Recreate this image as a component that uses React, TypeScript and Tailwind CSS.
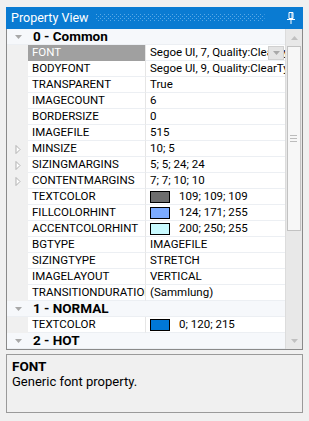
import React from 'react';

type Row =
  | { kind: 'cat'; label: string }
  | { kind: 'prop'; name: string; value: string; swatch?: string; expandable?: boolean; selected?: boolean };

const rows: Row[] = [
  { kind: 'cat', label: '0 - Common' },
  { kind: 'prop', name: 'FONT', value: 'Segoe UI, 7, Quality:ClearType', selected: true },
  { kind: 'prop', name: 'BODYFONT', value: 'Segoe UI, 9, Quality:ClearType' },
  { kind: 'prop', name: 'TRANSPARENT', value: 'True' },
  { kind: 'prop', name: 'IMAGECOUNT', value: '6' },
  { kind: 'prop', name: 'BORDERSIZE', value: '0' },
  { kind: 'prop', name: 'IMAGEFILE', value: '515' },
  { kind: 'prop', name: 'MINSIZE', value: '10; 5', expandable: true },
  { kind: 'prop', name: 'SIZINGMARGINS', value: '5; 5; 24; 24', expandable: true },
  { kind: 'prop', name: 'CONTENTMARGINS', value: '7; 7; 10; 10', expandable: true },
  { kind: 'prop', name: 'TEXTCOLOR', value: '109; 109; 109', swatch: '#6d6d6d' },
  { kind: 'prop', name: 'FILLCOLORHINT', value: '124; 171; 255', swatch: '#7cabff' },
  { kind: 'prop', name: 'ACCENTCOLORHINT', value: '200; 250; 255', swatch: '#c8faff' },
  { kind: 'prop', name: 'BGTYPE', value: 'IMAGEFILE' },
  { kind: 'prop', name: 'SIZINGTYPE', value: 'STRETCH' },
  { kind: 'prop', name: 'IMAGELAYOUT', value: 'VERTICAL' },
  { kind: 'prop', name: 'TRANSITIONDURATIONS', value: '(Sammlung)' },
  { kind: 'cat', label: '1 - NORMAL' },
  { kind: 'prop', name: 'TEXTCOLOR', value: '0; 120; 215', swatch: '#0078d7' },
  { kind: 'cat', label: '2 - HOT' },
];

function DownTri() {
  return (
    <svg width="9" height="6" viewBox="0 0 9 6">
      <path d="M1 1 L8 1 L4.5 5 Z" fill="#a8a8a8" />
    </svg>
  );
}

function RightTri() {
  return (
    <svg width="6" height="9" viewBox="0 0 6 9">
      <path d="M1 0.5 L5 4.5 L1 8.5 Z" fill="#fff" stroke="#b0b0b0" strokeWidth="1" />
    </svg>
  );
}

function Pin() {
  return (
    <svg width="8" height="12" viewBox="0 0 8 12">
      <path d="M2 0.5 H6 V6.5 H2 Z" fill="none" stroke="#fff" strokeWidth="1" />
      <path d="M5 1 V6" stroke="#fff" strokeWidth="1" />
      <path d="M0 7.5 H8" stroke="#fff" strokeWidth="1" />
      <path d="M4 8 V12" stroke="#fff" strokeWidth="1" />
    </svg>
  );
}

export default function App() {
  return (
    <div
      className="w-[309px] h-[421px] bg-[#f0f0f0] pt-[7px] px-[6px] text-black overflow-hidden"
      style={{ fontFamily: 'Roboto, "Noto Sans", "Liberation Sans", sans-serif' }}
    >
      {/* title bar */}
      <div className="h-[22px] bg-[#0a7bd2] flex items-center pl-[5px] pr-[8px]">
        <span className="text-white text-[12.5px] leading-none whitespace-nowrap">Property View</span>
        <svg className="ml-[8px] flex-1 min-w-0 h-[8px]" preserveAspectRatio="none">
          <defs>
            <pattern id="dots" width="4" height="4" patternUnits="userSpaceOnUse">
              <rect x="0" y="0" width="1" height="1" fill="#5aa9e6" />
              <rect x="2" y="2" width="1" height="1" fill="#5aa9e6" />
            </pattern>
          </defs>
          <rect width="100%" height="100%" fill="url(#dots)" />
        </svg>
        <div className="ml-[22px] flex items-center">
          <Pin />
        </div>
      </div>

      {/* grid */}
      <div className="border-x border-b border-[#8a8a8a] flex h-[321px]">
        <div className="flex-1 min-w-0 flex flex-col">
          {rows.map((r, i) =>
            r.kind === 'cat' ? (
              <div key={i} className="h-[16px] flex items-center bg-[#f6f8fb] border-b border-[#eceff3]">
                <div className="w-[21px] shrink-0 flex justify-center pl-[1px]">
                  <DownTri />
                </div>
                <span className="pl-[5px] text-[13.5px] font-bold leading-none whitespace-nowrap">{r.label}</span>
              </div>
            ) : (
              <div key={i} className="h-[16px] flex">
                <div className="w-[21px] shrink-0 bg-[#f0f0f0] flex items-center justify-center pl-[1px]">
                  {r.expandable && <RightTri />}
                </div>
                <div
                  className={`w-[118px] shrink-0 border-r border-[#e6e6e6] flex items-center pl-[4px] overflow-hidden whitespace-nowrap text-[11.5px] leading-none ${
                    r.selected ? 'bg-[#a0a0a0] text-white' : 'bg-white border-b border-b-[#eceff3]'
                  }`}
                >
                  {r.name}
                </div>
                <div className="flex-1 min-w-0 bg-white border-b border-[#eceff3] flex items-center pl-[4px] overflow-hidden whitespace-nowrap text-[11.5px] leading-none relative">
                  {r.swatch && (
                    <span className="w-[20px] h-[12px] border border-black mr-[9px] shrink-0" style={{ background: r.swatch }} />
                  )}
                  {r.value}
                  {r.selected && (
                    <div className="absolute right-[1px] top-[1px] w-[16px] h-[14px] bg-[#e4e4e4] border border-[#d0d0d0] flex items-center justify-center">
                      <DownTri />
                    </div>
                  )}
                </div>
              </div>
            )
          )}
        </div>
        {/* scrollbar */}
        <div className="w-[17px] shrink-0 bg-[#e8e8e8] border-l border-[#dcdcdc] flex flex-col items-center">
          <div className="h-[17px] flex items-center justify-center">
            <svg width="9" height="6" viewBox="0 0 9 6">
              <path d="M1 5 L8 5 L4.5 1 Z" fill="#c0c0c0" />
            </svg>
          </div>
          <div className="w-[14px] h-[185px] bg-[#f7f7f7] border border-[#c2c2c2] flex flex-col items-center justify-center gap-[2px] mr-[1px]">
            <div className="w-[7px] h-px bg-[#bcbcbc]" />
            <div className="w-[7px] h-px bg-[#bcbcbc]" />
            <div className="w-[7px] h-px bg-[#bcbcbc]" />
          </div>
          <div className="flex-1" />
          <div className="h-[16px] flex items-center justify-center">
            <svg width="9" height="6" viewBox="0 0 9 6">
              <path d="M1 1 L8 1 L4.5 5 Z" fill="#c0c0c0" />
            </svg>
          </div>
        </div>
      </div>

      {/* description */}
      <div className="mt-[4px] h-[59px] border border-[#9a9a9a] bg-[#f0f0f0] px-[5px] pt-[3px]">
        <div className="text-[13.5px] font-bold leading-[16px]">FONT</div>
        <div className="text-[13px] leading-[16px]">Generic font property.</div>
      </div>
    </div>
  );
}
